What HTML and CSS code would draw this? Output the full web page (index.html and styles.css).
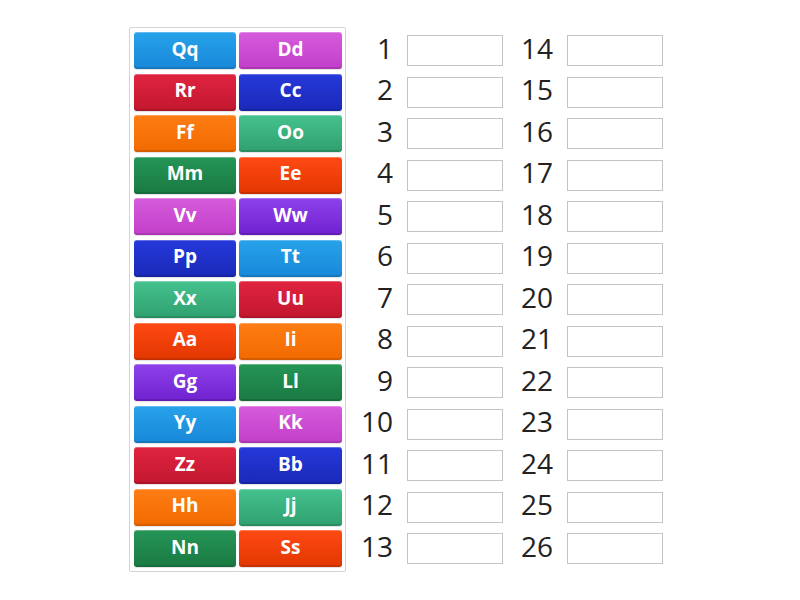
FILE: index.html
```html
<!DOCTYPE html>
<html>
<head>
<meta charset="utf-8">
<link rel="stylesheet" href="styles.css">
</head>
<body>
<div class="page">
  <div class="bank">
    <div class="tile blue">Qq</div><div class="tile magenta">Dd</div>
    <div class="tile red">Rr</div><div class="tile navy">Cc</div>
    <div class="tile orange">Ff</div><div class="tile green">Oo</div>
    <div class="tile dkgreen">Mm</div><div class="tile vermil">Ee</div>
    <div class="tile magenta">Vv</div><div class="tile purple">Ww</div>
    <div class="tile navy">Pp</div><div class="tile blue">Tt</div>
    <div class="tile green">Xx</div><div class="tile red">Uu</div>
    <div class="tile vermil">Aa</div><div class="tile orange">Ii</div>
    <div class="tile purple">Gg</div><div class="tile dkgreen">Ll</div>
    <div class="tile blue">Yy</div><div class="tile magenta">Kk</div>
    <div class="tile red">Zz</div><div class="tile navy">Bb</div>
    <div class="tile orange">Hh</div><div class="tile green">Jj</div>
    <div class="tile dkgreen">Nn</div><div class="tile vermil">Ss</div>
  </div>
  <div class="slots">
    <div class="col">
      <div class="row"><span class="num">1</span><span class="box"></span></div>
      <div class="row"><span class="num">2</span><span class="box"></span></div>
      <div class="row"><span class="num">3</span><span class="box"></span></div>
      <div class="row"><span class="num">4</span><span class="box"></span></div>
      <div class="row"><span class="num">5</span><span class="box"></span></div>
      <div class="row"><span class="num">6</span><span class="box"></span></div>
      <div class="row"><span class="num">7</span><span class="box"></span></div>
      <div class="row"><span class="num">8</span><span class="box"></span></div>
      <div class="row"><span class="num">9</span><span class="box"></span></div>
      <div class="row"><span class="num">10</span><span class="box"></span></div>
      <div class="row"><span class="num">11</span><span class="box"></span></div>
      <div class="row"><span class="num">12</span><span class="box"></span></div>
      <div class="row"><span class="num">13</span><span class="box"></span></div>
    </div>
    <div class="col">
      <div class="row"><span class="num">14</span><span class="box"></span></div>
      <div class="row"><span class="num">15</span><span class="box"></span></div>
      <div class="row"><span class="num">16</span><span class="box"></span></div>
      <div class="row"><span class="num">17</span><span class="box"></span></div>
      <div class="row"><span class="num">18</span><span class="box"></span></div>
      <div class="row"><span class="num">19</span><span class="box"></span></div>
      <div class="row"><span class="num">20</span><span class="box"></span></div>
      <div class="row"><span class="num">21</span><span class="box"></span></div>
      <div class="row"><span class="num">22</span><span class="box"></span></div>
      <div class="row"><span class="num">23</span><span class="box"></span></div>
      <div class="row"><span class="num">24</span><span class="box"></span></div>
      <div class="row"><span class="num">25</span><span class="box"></span></div>
      <div class="row"><span class="num">26</span><span class="box"></span></div>
    </div>
  </div>
</div>
</body>
</html>
```

FILE: styles.css
```css
html, body {
  margin: 0;
  padding: 0;
  background: #ffffff;
}
body {
  font-family: "Open Sans", "Noto Sans", sans-serif;
  width: 800px;
  height: 600px;
  overflow: hidden;
}
.page {
  display: flex;
  align-items: flex-start;
  padding: 27px 0 0 129px;
}
.bank {
  border: 1px solid #d4d4d4;
  border-radius: 2px;
  padding: 4px 3px 4px 4px;
  display: grid;
  grid-template-columns: 102px 103px;
  grid-auto-rows: 37px;
  column-gap: 3px;
  row-gap: 4.5px;
}
.tile {
  display: flex;
  align-items: center;
  justify-content: center;
  padding-bottom: 4px;
  box-sizing: border-box;
  border-radius: 3px;
  color: #ffffff;
  font-weight: 700;
  font-size: 19px;
  line-height: 24px;
  box-shadow: inset 0 1px 0 rgba(255,255,255,0.28), inset 0 -2px 0 rgba(0,0,0,0.12), 0 1px 1px rgba(0,0,0,0.12);
}
.blue { background: linear-gradient(#27a2ea, #1888d8); }
.magenta { background: linear-gradient(#d65cdc, #c13ec9); }
.red { background: linear-gradient(#e02440, #c2172f); }
.navy { background: linear-gradient(#2539da, #1a29b8); }
.orange { background: linear-gradient(#ff7d14, #f16a00); }
.green { background: linear-gradient(#45c28e, #2fa06f); }
.dkgreen { background: linear-gradient(#259556, #1a7a42); }
.vermil { background: linear-gradient(#ff4914, #e23700); }
.purple { background: linear-gradient(#8e42ea, #6f21cf); }

.slots {
  display: flex;
  padding-top: 5px;
  margin-left: 7px;
  gap: 10px;
}
.col {
  display: grid;
  grid-auto-rows: 37px;
  row-gap: 4.5px;
}
.row {
  display: flex;
  align-items: center;
  gap: 14px;
}
.num {
  width: 40px;
  text-align: right;
  font-size: 28px;
  line-height: 32px;
  color: #222222;
  padding-bottom: 6px;
}
.box {
  width: 96px;
  height: 31px;
  box-sizing: border-box;
  border: 1px solid #c4c4c4;
  background: #ffffff;
}
```
